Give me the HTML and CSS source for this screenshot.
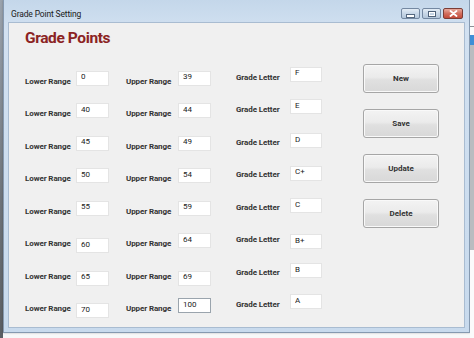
FILE: index.html
```html
<!DOCTYPE html>
<html lang="en">
<head>
    <meta charset="UTF-8">
    <title>Grade Point Setting</title>
    <link rel="stylesheet" href="styles.css">
</head>
<body>
    <div class="desk-left"></div>
    <div class="window">
        <div class="titlebar">
            <span class="caption">Grade Point Setting</span>
            <div class="caption-btns">
                <span class="cbtn cbtn-min"><i></i></span>
                <span class="cbtn cbtn-max"><i></i></span>
                <span class="cbtn cbtn-close">
                    <svg width="9" height="7" viewBox="0 0 9 7"><path d="M1.5 1 L7.5 6 M7.5 1 L1.5 6" stroke="#fff" stroke-width="1.8" stroke-linecap="round"/></svg>
                </span>
            </div>
        </div>
        <div class="client">
            <h1 class="heading">Grade Points</h1>
            <div class="form">
                <div class="col col-lower">
                    <div class="pair"><label>Lower Range</label><input class="box" type="text" value="0"></div>
                    <div class="pair"><label>Lower Range</label><input class="box" type="text" value="40"></div>
                    <div class="pair"><label>Lower Range</label><input class="box" type="text" value="45"></div>
                    <div class="pair"><label>Lower Range</label><input class="box" type="text" value="50"></div>
                    <div class="pair"><label>Lower Range</label><input class="box" type="text" value="55"></div>
                    <div class="pair"><label>Lower Range</label><input class="box dn" type="text" value="60"></div>
                    <div class="pair"><label>Lower Range</label><input class="box dn" type="text" value="65"></div>
                    <div class="pair"><label>Lower Range</label><input class="box dn" type="text" value="70"></div>
                </div>
                <div class="col col-upper">
                    <div class="pair"><label>Upper Range</label><input class="box" type="text" value="39"></div>
                    <div class="pair"><label>Upper Range</label><input class="box" type="text" value="44"></div>
                    <div class="pair"><label>Upper Range</label><input class="box" type="text" value="49"></div>
                    <div class="pair"><label>Upper Range</label><input class="box" type="text" value="54"></div>
                    <div class="pair"><label>Upper Range</label><input class="box" type="text" value="59"></div>
                    <div class="pair"><label>Upper Range</label><input class="box" type="text" value="64"></div>
                    <div class="pair"><label>Upper Range</label><input class="box dn" type="text" value="69"></div>
                    <div class="pair"><label>Upper Range</label><input class="box focused" type="text" value="100"></div>
                </div>
                <div class="col col-grade">
                    <div class="pair"><label>Grade Letter</label><input class="box" type="text" value="F"></div>
                    <div class="pair"><label>Grade Letter</label><input class="box" type="text" value="E"></div>
                    <div class="pair"><label>Grade Letter</label><input class="box mid" type="text" value="D"></div>
                    <div class="pair"><label>Grade Letter</label><input class="box mid" type="text" value="C+"></div>
                    <div class="pair"><label>Grade Letter</label><input class="box mid" type="text" value="C"></div>
                    <div class="pair"><label>Grade Letter</label><input class="box dn" type="text" value="B+"></div>
                    <div class="pair"><label>Grade Letter</label><input class="box mid" type="text" value="B"></div>
                    <div class="pair"><label>Grade Letter</label><input class="box" type="text" value="A"></div>
                </div>
                <div class="buttons">
                    <button class="btn">New</button>
                    <button class="btn">Save</button>
                    <button class="btn">Update</button>
                    <button class="btn">Delete</button>
                </div>
            </div>
        </div>
    </div>
    <div class="desk-right">
        <div class="dr-line"></div>
        <div class="dr-blue"></div>
        <div class="dr-grey"></div>
    </div>
</body>
</html>
```

FILE: styles.css
```css
body{margin:0;height:338px;overflow:hidden;display:flex;align-items:flex-start;background-color:#f7f8f9;font-family:Roboto,"Noto Sans",sans-serif;}
.desk-left{width:3px;height:338px;background:linear-gradient(#9aa3ad,#6d737a 60%,#5a5e63);}
.desk-right{flex:1;height:338px;background-color:#fbfbfb;}
.dr-line{height:1px;margin-top:26px;background-color:#8a8f96;}
.dr-blue{height:10px;margin-top:8px;background-color:#3f8fd6;}
.dr-grey{height:205px;background-color:#b9bcc0;}

.window{
    width:467px;
    box-sizing:border-box;
    padding:0 4px 4px;
    border:1px solid #8599b0;
    border-top:0 none;
    background:linear-gradient(#c4d7ea,#d2e1f1 30px,#c8daed);
    box-shadow:0 0 2px rgba(0,0,0,.25);
}
.titlebar{height:22px;display:flex;justify-content:space-between;align-items:flex-start;}
.caption{padding:8px 0 0 3px;font-size:8.5px;line-height:12px;letter-spacing:-0.15px;color:#1b1b1b;}
.caption-btns{display:flex;padding:8px 2px 0 0;}
.cbtn{width:19px;height:11px;box-sizing:border-box;margin-left:3px;border:1px solid #7488a1;border-radius:2px;background:linear-gradient(#e3ecf5,#c8d7e7 50%,#b3c6da);display:flex;align-items:center;justify-content:center;}
.cbtn-max{margin-left:2px;}
.cbtn-close{width:20px;margin-left:2px;border-color:#7b3d36;background:linear-gradient(#e8a99c,#d26e5e 50%,#c24a39);}
.cbtn-min i{width:7px;height:2px;margin-top:4px;background-color:#fff;border:1px solid #55687f;}
.cbtn-max i{width:6px;height:4px;background-color:transparent;border:1px solid #4f6279;box-shadow:inset 0 0 0 1px #fff;}

.client{height:306px;box-sizing:border-box;border:1px solid #a9bcd1;background-color:#f0f0f0;padding-left:16px;}
.heading{margin:0;padding-top:6px;font-size:15.5px;line-height:18px;font-weight:700;letter-spacing:-0.4px;color:#8b2323;}

.form{display:flex;align-items:flex-start;margin-top:18px;}
.col{display:flex;flex-direction:column;}
.col-upper{margin-left:17px;}
.col-grade{margin-left:25px;margin-top:-4px;}
.pair{height:32.5px;display:flex;align-items:center;}
.pair label{font-size:8px;font-weight:700;color:#333;letter-spacing:-0.1px;}
.col-lower label{width:51px;}
.col-upper label{width:52px;}
.col-grade label{width:54px;}

.box{
    width:33px;
    height:15px;
    box-sizing:border-box;
    margin:0 0 6px;
    padding:0 0 3px 4px;
    border:1px solid #e4e4e4;
    background-color:#fff;
    font-family:inherit;
    font-size:8px;
    color:#222;
    outline:0 none;
}
.col-grade .box{width:32px;}
.box.dn{margin:4px 0 0;}
.box.mid{margin:0 0 3px;}
.box.focused{border-color:#9aa4ad;}

.buttons{display:flex;flex-direction:column;gap:16px;margin:-1px 0 0 41px;}
.btn{
    width:76px;
    height:29px;
    padding:0;
    border:1px solid #a6a6a6;
    border-radius:3px;
    background:linear-gradient(#f3f3f3,#ebebeb 45%,#e0e0e0 55%,#d8d8d8);
    box-shadow:inset 0 0 0 1px #f9f9f9;
    font-family:inherit;
    font-size:8px;
    font-weight:700;
    color:#333;
}
```
